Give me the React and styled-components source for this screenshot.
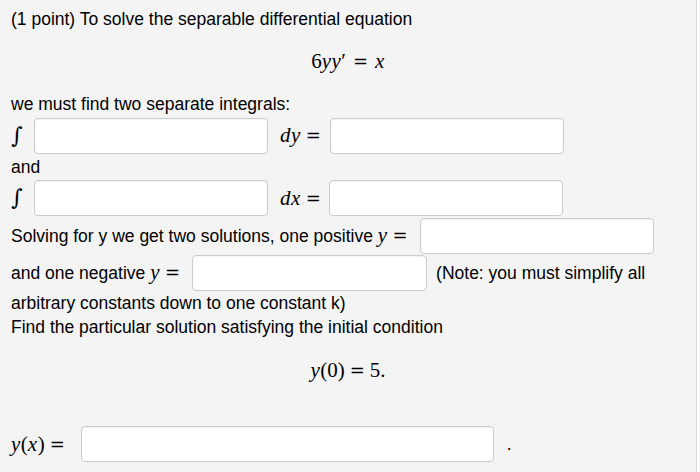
import React from "react";
import styled, { createGlobalStyle } from "styled-components";

const GlobalStyle = createGlobalStyle`
  html, body {
    margin: 0;
    padding: 0;
    background: #ffffff;
  }
  body {
    font-family: "Liberation Sans", Arial, sans-serif;
    color: #000;
  }
`;

const Page = styled.div`
  width: 697px;
  height: 472px;
  box-sizing: border-box;
  padding: 7px 0 0 11px;
  background: #f4f4f4;
  border-right: 1px solid #dcdcdc;
  font-size: 17.5px;
  line-height: 24px;
`;

const Line = styled.div`
  height: 24px;
  white-space: nowrap;
`;

const Display = styled.div`
  height: ${(p) => p.$h || 61}px;
  display: flex;
  align-items: center;
  justify-content: center;
  padding-right: 11px;
`;

const Math = styled.span`
  font-family: "Liberation Serif", "DejaVu Serif", serif;
  font-size: 21px;
  white-space: nowrap;
`;

const V = styled.i`
  font-style: italic;
  letter-spacing: 0.5px;
`;

const Op = styled.span`
  font-family: "DejaVu Serif", serif;
  font-size: 18px;
  margin: 0 ${(p) => p.$space ?? 5}px;
`;

const Row = styled.div`
  display: flex;
  align-items: center;
  height: ${(p) => p.$h || 37}px;
  white-space: nowrap;
`;

const LastRow = styled(Row)`
  box-sizing: border-box;
  padding-top: 24px;
  height: 62px;
`;

const Integral = styled.span`
  font-family: "DejaVu Serif", serif;
  font-style: italic;
  font-size: 22px;
  width: 23px;
`;

const Input = styled.div`
  width: ${(p) => p.$w || 234}px;
  height: 36px;
  box-sizing: border-box;
  background: #fff;
  border: 1px solid #cccccc;
  border-radius: 4px;
  box-shadow: inset 0 1px 1px rgba(0, 0, 0, 0.05);
  margin-left: ${(p) => p.$gap ?? 0}px;
  flex: none;
`;

const Label = styled.span`
  margin-left: 12px;
`;

const Note = styled.span`
  margin-left: ${(p) => p.$gap ?? 9}px;
`;

function App() {
  return (
    <>
      <GlobalStyle />
      <Page>
        <Line>(1 point) To solve the separable differential equation</Line>
        <Display>
          <Math>
            6<V>yy</V>′<Op $space={7}>=</Op>
            <V>x</V>
          </Math>
        </Display>
        <Line>we must find two separate integrals:</Line>
        <Row $h={39}>
          <Integral>∫</Integral>
          <Input />
          <Label>
            <Math>
              <V>dy</V>
              <Op>=</Op>
            </Math>
          </Label>
          <Input $gap={4} />
        </Row>
        <Line>and</Line>
        <Row $h={38}>
          <Integral>∫</Integral>
          <Input />
          <Label>
            <Math>
              <V>dx</V>
              <Op>=</Op>
            </Math>
          </Label>
          <Input $gap={3} />
        </Row>
        <Row>
          Solving for y we get two solutions, one positive&nbsp;
          <Math>
            <V>y</V>
            <Op>=</Op>
          </Math>
          <Input $gap={7} />
        </Row>
        <Row>
          and one negative&nbsp;
          <Math>
            <V>y</V>
            <Op>=</Op>
          </Math>
          <Input $w={235} $gap={7} />
          <Note>(Note: you must simplify all</Note>
        </Row>
        <Line>arbitrary constants down to one constant k)</Line>
        <Line>Find the particular solution satisfying the initial condition</Line>
        <Display $h={62}>
          <Math>
            <V>y</V>(0)<Op>=</Op>5.
          </Math>
        </Display>
        <LastRow>
          <Math>
            <V>y</V>(<V>x</V>)<Op>=</Op>
          </Math>
          <Input $w={413} $gap={11} />
          <Note $gap={13}>.</Note>
        </LastRow>
      </Page>
    </>
  );
}

export default App;
